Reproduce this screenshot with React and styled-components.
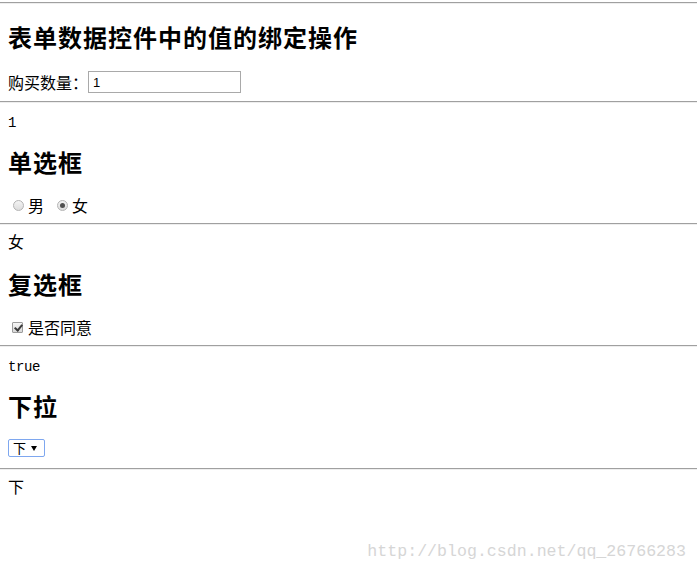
import styled, { createGlobalStyle } from "styled-components";
import { useState } from "react";

const GlobalStyle = createGlobalStyle`
  body {
    margin: 0;
    background: #fff;
    color: #000;
    font-family: "Noto Sans CJK SC", "Liberation Sans", sans-serif;
  }
`;

const Page = styled.div`
  position: relative;
  min-height: 573px;
  padding: 2px 8px 0;
  box-sizing: border-box;
  display: flex;
  flex-direction: column;
  align-items: flex-start;
`;

const Rule = styled.hr`
  align-self: stretch;
  margin: ${(p) => (p.$mt ?? 8)}px -8px 0;
  height: 0;
  border: none;
  border-top: 1px solid #a0a0a0;
  border-bottom: 1px solid #eeeeee;
`;

const Title = styled.h2`
  margin: ${(p) => p.$mt || 18}px 0 0;
  font-size: 24px;
  line-height: 28px;
  font-weight: 700;
  letter-spacing: 1px;
`;

const Row = styled.div`
  margin-top: ${(p) => p.$mt || 19}px;
  display: flex;
  align-items: center;
  height: ${(p) => p.$h || 20}px;
  font-size: 16px;
  line-height: 20px;
  padding-left: ${(p) => p.$pad || 0}px;
  gap: ${(p) => p.$gap || 0}px;
`;

const TextInput = styled.input`
  width: 153px;
  height: 22px;
  box-sizing: border-box;
  border: 1px solid #a9a9a9;
  padding: 0 4px;
  font-family: "Liberation Sans", sans-serif;
  font-size: 13px;
  color: #000;
  outline: none;
`;

const Output = styled.div`
  margin-top: 7px;
  height: 20px;
  line-height: 20px;
  font-family: ${(p) =>
    p.$latin ? `"Liberation Mono", monospace` : `"Noto Sans CJK SC", sans-serif`};
  font-size: ${(p) => (p.$latin ? 14 : 16)}px;
  letter-spacing: ${(p) => (p.$latin ? -0.4 : 0)}px;
  position: relative;
  top: ${(p) => (p.$latin ? 3 : -1)}px;
`;

const Choice = styled.label`
  display: flex;
  align-items: center;
  gap: ${(p) => p.$gap || 4}px;
  cursor: default;
`;

const Radio = styled.input.attrs({ type: "radio" })`
  appearance: none;
  margin: 0;
  width: 11px;
  height: 11px;
  border-radius: 50%;
  border: 1px solid #b4b4b4;
  background: linear-gradient(#f4f4f4, #dcdcdc);
  box-sizing: border-box;
  display: grid;
  place-items: center;
  &:checked::after {
    content: "";
    width: 5px;
    height: 5px;
    border-radius: 50%;
    background: #505050;
  }
`;

const Check = styled.input.attrs({ type: "checkbox" })`
  appearance: none;
  margin: 0;
  width: 11px;
  height: 11px;
  border: 1px solid #9c9c9c;
  border-radius: 1px;
  background: linear-gradient(#f6f6f6, #d8d8d8);
  box-sizing: border-box;
  position: relative;
  &:checked::after {
    content: "";
    position: absolute;
    left: 3px;
    top: 0px;
    width: 3px;
    height: 6px;
    border: solid #3a3a3a;
    border-width: 0 2px 2px 0;
    transform: rotate(40deg);
  }
`;

const SelectWrap = styled.div`
  margin-top: 19px;
  position: relative;
  display: flex;
  &::after {
    content: "";
    position: absolute;
    right: 8px;
    top: 7px;
    border-left: 3px solid transparent;
    border-right: 3px solid transparent;
    border-top: 5px solid #000;
    pointer-events: none;
  }
`;

const Select = styled.select`
  appearance: none;
  width: 37px;
  height: 18px;
  box-sizing: border-box;
  border: 1px solid #7ea7ef;
  border-radius: 2px;
  background: #fff;
  padding: 0 0 0 4px;
  font-family: "Noto Sans CJK SC", sans-serif;
  font-size: 13px;
  line-height: 16px;
  color: #000;
  outline: none;
`;

const Watermark = styled.div`
  position: absolute;
  right: 11px;
  top: 541px;
  font-family: "Liberation Mono", monospace;
  font-size: 16.6px;
  line-height: 22px;
  color: #d6d6d6;
  pointer-events: none;
`;

const isLatin = (v) => /^[\x00-\x7f]*$/.test(v);

export default function App() {
  const [count, setCount] = useState("1");
  const [sex, setSex] = useState("女");
  const [agree, setAgree] = useState(true);
  const [dir, setDir] = useState("下");

  return (
    <Page>
      <GlobalStyle />
      <Rule $mt={0} />
      <Title $mt={19}>表单数据控件中的值的绑定操作</Title>
      <Row $h={22} $mt={20}>
        购买数量：
        <TextInput value={count} onChange={(e) => setCount(e.target.value)} />
      </Row>
      <Rule />
      <Output $latin={isLatin(count)}>{count}</Output>

      <Title>单选框</Title>
      <Row $pad={5} $gap={13}>
        {["男", "女"].map((v) => (
          <Choice key={v}>
            <Radio name="sex" value={v} checked={sex === v} onChange={() => setSex(v)} />
            {v}
          </Choice>
        ))}
      </Row>
      <Rule />
      <Output $latin={isLatin(sex)}>{sex}</Output>

      <Title>复选框</Title>
      <Row $pad={4}>
        <Choice $gap={5}>
          <Check checked={agree} onChange={(e) => setAgree(e.target.checked)} />
          是否同意
        </Choice>
      </Row>
      <Rule />
      <Output $latin>{String(agree)}</Output>

      <Title>下拉</Title>
      <SelectWrap>
        <Select value={dir} onChange={(e) => setDir(e.target.value)}>
          <option value="上">上</option>
          <option value="下">下</option>
        </Select>
      </SelectWrap>
      <Rule $mt={11} />
      <Output $latin={isLatin(dir)}>{dir}</Output>

      <Watermark>http://blog.csdn.net/qq_26766283</Watermark>
    </Page>
  );
}
